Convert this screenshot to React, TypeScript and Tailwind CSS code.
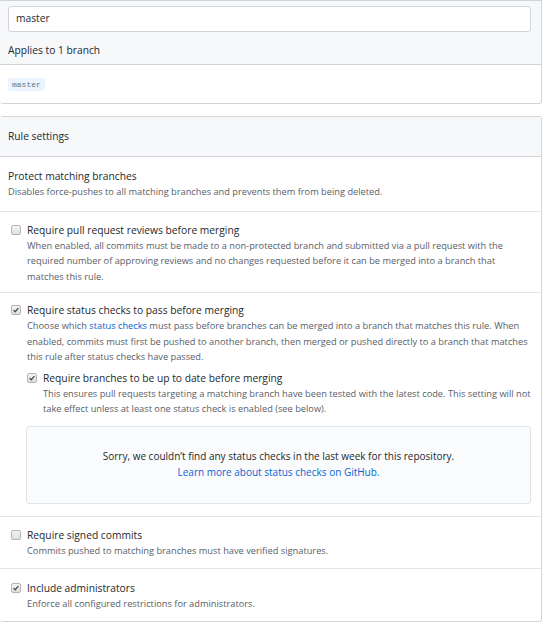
import { ReactNode } from "react";

const font = { fontFamily: '"Open Sans", "Noto Sans", sans-serif' };

function Checkbox({ checked }: { checked?: boolean }) {
	return (
		<span className="mt-[3px] flex h-[10px] w-[10px] shrink-0 items-center justify-center rounded-[2px] border border-[#b5b5b5] bg-gradient-to-b from-[#f4f4f4] to-[#dedede]">
			{checked && (
				<svg viewBox="0 0 10 10" className="h-[8px] w-[8px]">
					<path d="M2 5.2 L4 7.2 L8 2.6" fill="none" stroke="#4a4a4a" strokeWidth="1.6" />
				</svg>
			)}
		</span>
	);
}

function Option({
	checked,
	title,
	children,
	extra,
}: {
	checked?: boolean;
	title: string;
	children: ReactNode;
	extra?: ReactNode;
}) {
	return (
		<div className="flex gap-[6px]">
			<Checkbox checked={checked} />
			<div className="min-w-0 flex-1">
				<div className="text-[10.25px] leading-[16px] text-[#24292e]">{title}</div>
				<p className="text-[9.25px] leading-[15.5px] text-[#586069]">{children}</p>
				{extra}
			</div>
		</div>
	);
}

export default function App() {
	return (
		<div className="min-h-screen bg-white pr-[3px]" style={font}>
			{/* Branch name pattern */}
			<div className="rounded-b-[3px] border-y border-r border-[#d1d5da]">
				<div className="border-b border-[#d1d5da] bg-[#f6f8fa] pb-[6px] pl-2 pr-[10px] pt-[5px]">
					<div className="flex h-[26px] items-center rounded-[3px] border border-[#d1d5da] bg-white px-[7px] text-[10.25px] text-[#24292e]">
						master
					</div>
					<div className="mt-[10px] text-[10.25px] leading-[16px] text-[#24292e]">
						Applies to 1 branch
					</div>
				</div>
				<div className="flex h-[38px] items-center pl-2">
					<span className="rounded-[3px] bg-[#eaf5ff] px-[4px] py-[1px] font-['Liberation_Mono',monospace] text-[8px] leading-[11px] text-[#6a737d]">
						master
					</span>
				</div>
			</div>

			{/* Rule settings */}
			<div className="mt-3 rounded-[3px] border-y border-r border-[#d1d5da]">
				<div className="flex h-[40px] items-center border-b border-[#d1d5da] bg-[#f6f8fa] pl-2 text-[10.25px] text-[#24292e]">
					Rule settings
				</div>

				<div className="border-b border-[#e1e4e8] pb-[11px] pl-2 pt-[11px]">
					<div className="text-[10.25px] leading-[16px] text-[#24292e]">Protect matching branches</div>
					<p className="text-[9.25px] leading-[15.5px] text-[#586069]">
						Disables force-pushes to all matching branches and prevents them from being deleted.
					</p>
				</div>

				<div className="border-b border-[#e1e4e8] pb-[8px] pl-[11px] pr-[10px] pt-[10px]">
					<Option title="Require pull request reviews before merging">
						When enabled, all commits must be made to a non-protected branch and submitted via a pull
						request with the required number of approving reviews and no changes requested before it
						can be merged into a branch that matches this rule.
					</Option>
				</div>

				<div className="border-b border-[#e1e4e8] pb-3 pl-[11px] pr-[10px] pt-[9px]">
					<Option
						checked
						title="Require status checks to pass before merging"
						extra={
							<>
								<div className="mt-[5px]">
									<Option checked title="Require branches to be up to date before merging">
										This ensures pull requests targeting a matching branch have been tested with the
										latest code. This setting will not take effect unless at least one status check is
										enabled (see below).
									</Option>
								</div>
								<div className="-ml-px mt-[9px] flex h-[78px] flex-col items-center justify-center rounded-[3px] border border-[#e1e4e8] bg-[#fafbfc] text-[10px] leading-[15.5px]">
									<span className="text-[#24292e]">
										Sorry, we couldn’t find any status checks in the last week for this repository.
									</span>
									<a className="text-[#0366d6]">Learn more about status checks on GitHub.</a>
								</div>
							</>
						}
					>
						Choose which <a className="text-[#0366d6]">status checks</a> must pass before branches can
						be merged into a branch that matches this rule. When enabled, commits must first be pushed
						to another branch, then merged or pushed directly to a branch that matches this rule after
						status checks have passed.
					</Option>
				</div>

				<div className="border-b border-[#e1e4e8] pb-[10px] pl-[11px] pr-[10px] pt-[10px]">
					<Option title="Require signed commits">
						Commits pushed to matching branches must have verified signatures.
					</Option>
				</div>

				<div className="pb-[9px] pl-[11px] pr-[10px] pt-[11px]">
					<Option checked title="Include administrators">
						Enforce all configured restrictions for administrators.
					</Option>
				</div>
			</div>
		</div>
	);
}
